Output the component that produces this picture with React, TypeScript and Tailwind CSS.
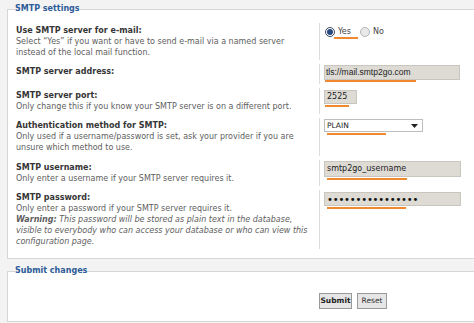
import React from "react";

const font = "font-['DejaVu_Sans',Verdana,sans-serif]";

function Underline({ left, width, top }: { left: number; width: number; top: number }) {
    return (
        <span
            className="absolute h-[2px] bg-[#f08a30]"
            style={{ left, width, top }}
        />
    );
}

function Row({
    h,
    label,
    children,
    right,
    rightPad,
}: {
    h: number;
    label: string;
    children?: React.ReactNode;
    right: React.ReactNode;
    rightPad: number;
}) {
    return (
        <div className="flex" style={{ height: h }}>
            <div className="w-[311px] shrink-0 pl-[8px] pt-[4px]">
                <div className="font-bold text-[#363636] leading-[11px]">{label}</div>
                <div className="text-[#5e5e5e] leading-[11px] whitespace-nowrap">{children}</div>
            </div>
            <div className="my-[2px] border-l border-[#dcdcdc] pl-[4px]" style={{ paddingTop: rightPad - 2 }}>
                {right}
            </div>
        </div>
    );
}

export default function App() {
    return (
        <div className={`${font} text-[8px] min-h-[323px] w-[474px] overflow-hidden bg-[#f3f3f3] pl-[7px] pt-[3px]`}>
            <fieldset className="w-[692px] border border-[#d6d6d6] bg-white pb-[7px]">
                <legend className="ml-[7px] text-[8px] font-bold text-[#2c5b98] leading-[12px]">
                    SMTP settings
                </legend>
                <div className="h-[6px]" />

                <Row
                    h={41}
                    label="Use SMTP server for e-mail:"
                    rightPad={5}
                    right={
                        <div className="relative flex items-center gap-[3px] pl-[1px]">
                            <span className="flex size-[10px] items-center justify-center rounded-full border border-[#39475e] bg-white">
                                <span className="size-[6px] rounded-full bg-[#27497c]" />
                            </span>
                            <span className="text-[#444] leading-[11px]">Yes</span>
                            <span className="ml-[6px] size-[10px] rounded-full border border-[#b4b4b4] bg-[#e9e9e9]" />
                            <span className="text-[#444] leading-[11px]">No</span>
                            <Underline left={10} width={24} top={11} />
                        </div>
                    }
                >
                    Select “Yes” if you want or have to send e-mail via a named server
                    <br />
                    instead of the local mail function.
                </Row>

                <Row
                    h={24}
                    label="SMTP server address:"
                    rightPad={3}
                    right={
                        <div className="relative">
                            <div className="flex h-[15px] w-[136px] items-center border border-[#c9c6c0] bg-[#dedbd5] pl-[1px] font-['Liberation_Sans',Arial,sans-serif] text-[8.5px] text-[#222]">
                                tls://mail.smtp2go.com
                            </div>
                            <Underline left={1} width={91} top={15} />
                        </div>
                    }
                />

                <Row
                    h={30}
                    label="SMTP server port:"
                    rightPad={4}
                    right={
                        <div className="relative">
                            <div className="flex h-[14px] w-[33px] items-center border border-[#c9c6c0] bg-[#dedbd5] pl-[2px] text-[#222]">
                                2525
                            </div>
                            <Underline left={1} width={24} top={15} />
                        </div>
                    }
                >
                    Only change this if you know your SMTP server is on a different port.
                </Row>

                <Row
                    h={42}
                    label="Authentication method for SMTP:"
                    rightPad={3}
                    right={
                        <div className="relative">
                            <div className="flex h-[13px] w-[99px] items-center justify-between border border-[#bdbdbd] bg-white pl-[2px] pr-[4px] text-[7.5px] text-[#222]">
                                PLAIN
                                <svg width="7" height="4" viewBox="0 0 7 4">
                                    <path d="M0 0h7L3.5 4z" fill="#222" />
                                </svg>
                            </div>
                            <Underline left={3} width={59} top={14} />
                        </div>
                    }
                >
                    Only used if a username/password is set, ask your provider if you are
                    <br />
                    unsure which method to use.
                </Row>

                <Row
                    h={30}
                    label="SMTP username:"
                    rightPad={3}
                    right={
                        <div className="relative">
                            <div className="flex h-[16px] w-[137px] items-center border border-[#c9c6c0] bg-[#dedbd5] pl-[2px] text-[8px] text-[#222]">
                                smtp2go_username
                            </div>
                            <Underline left={3} width={80} top={17} />
                        </div>
                    }
                >
                    Only enter a username if your SMTP server requires it.
                </Row>

                <Row
                    h={63}
                    label="SMTP password:"
                    rightPad={4}
                    right={
                        <div className="relative">
                            <div className="flex h-[14px] w-[137px] items-center border border-[#c9c6c0] bg-[#dedbd5] pl-[2px] text-[10px] tracking-[-0.2px] text-[#111]">
                                ••••••••••••••••
                            </div>
                            <Underline left={3} width={79} top={15} />
                        </div>
                    }
                >
                    Only enter a password if your SMTP server requires it.
                    <br />
                    <span className="italic">
                        <b>Warning:</b> This password will be stored as plain text in the database,
                        <br />
                        visible to everybody who can access your database or who can view this
                        <br />
                        configuration page.
                    </span>
                </Row>
            </fieldset>

            <fieldset className="mt-[6px] w-[692px] border border-[#d6d6d6] bg-white">
                <legend className="ml-[7px] text-[8px] font-bold text-[#2c5b98] leading-[12px]">
                    Submit changes
                </legend>
                <div className="flex h-[44px] items-start justify-center gap-[5px] pt-[16px]">
                    <button className="h-[16px] w-[33px] border border-[#9a9a9a] bg-[#e6e6e6] text-[7.5px] font-bold text-[#222]">
                        Submit
                    </button>
                    <button className="h-[16px] w-[30px] border border-[#9a9a9a] bg-[#e6e6e6] text-[7.5px] text-[#333]">
                        Reset
                    </button>
                </div>
            </fieldset>
        </div>
    );
}
